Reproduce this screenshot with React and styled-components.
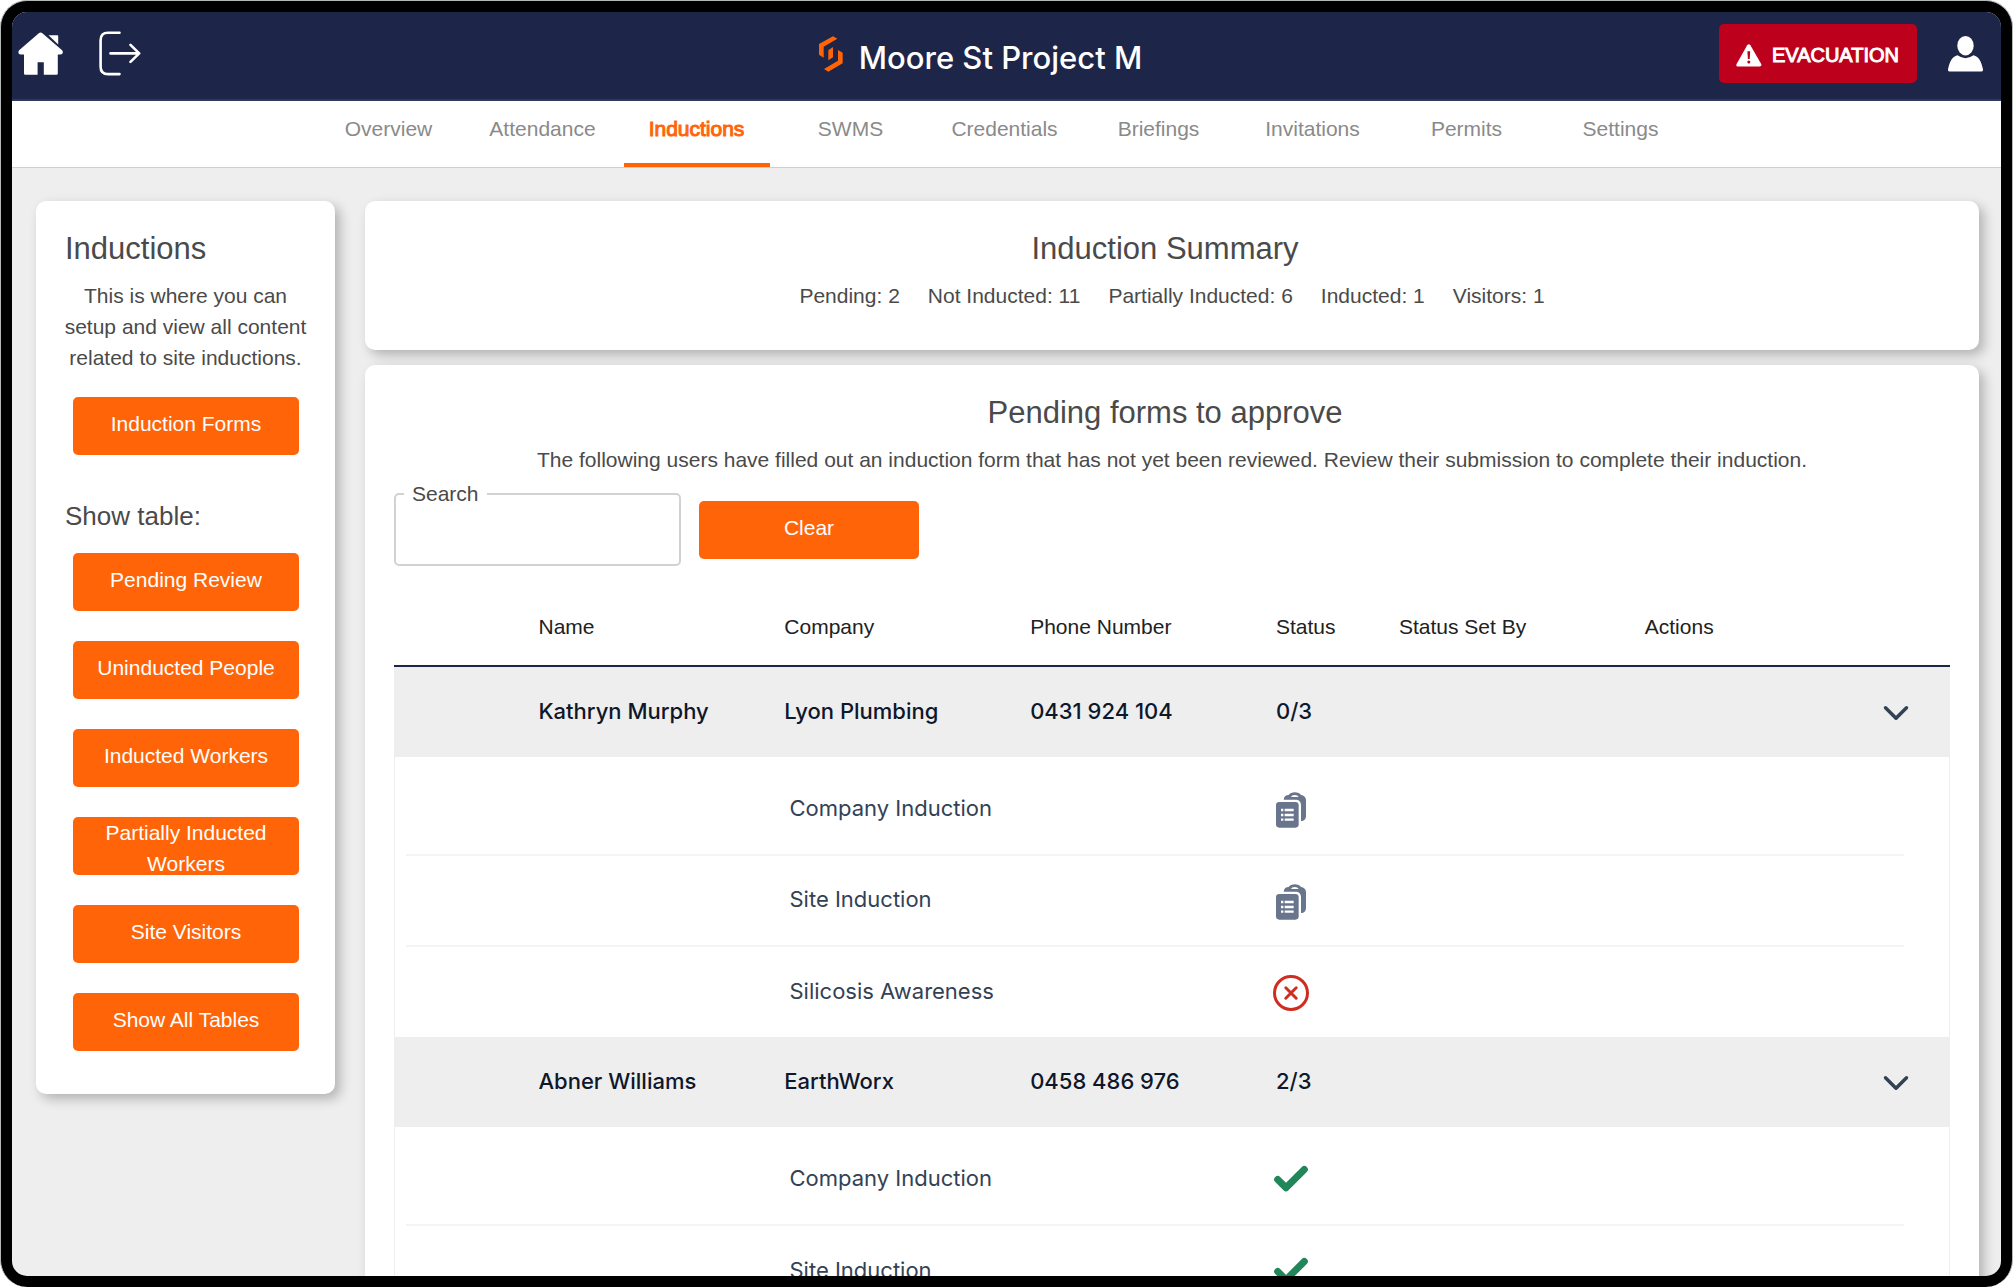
import { Fragment, useState } from "react";
import styled, { createGlobalStyle } from "styled-components";
import { ChevronDown } from "lucide-react";

const GlobalStyle = createGlobalStyle`
  :root {
    --navy-color: #1d2649;
    --orange-color: #ff6508;
    --red-color: #bd001c;
    --grey-color: #eeeeee;
    --text-color: #4a4a4a;
    --sans: "Liberation Sans", Arial, sans-serif;
    --inter: Inter, "Liberation Sans", sans-serif;
  }

  * {
    box-sizing: border-box;
  }

  body {
    margin: 0;
    background: #ffffff;
    color: var(--text-color);
    font-family: var(--sans);
    font-size: 21px;
    line-height: 31px;
  }

  button,
  input {
    font: inherit;
  }
`;

const Device = styled.div`
  height: 100vh;
  padding: 11px;
  background: #000000;
  border: 1px solid #b4b9b7;
  border-bottom: 0;
  border-radius: 27px;
`;

const Screen = styled.div`
  height: 100%;
  overflow: hidden;
  background: var(--grey-color);
  border-radius: 15px;
`;

const Header = styled.header`
  display: grid;
  grid-template-columns: 1fr auto 1fr;
  align-items: center;
  height: 89px;
  padding: 0 18px 6px 6px;
  background: var(--navy-color);
  box-shadow: inset 0 -2px 1px #2f3a60;
`;

const HeaderGroup = styled.div`
  display: flex;
  align-items: center;
  justify-content: ${(props) => (props.$end ? "flex-end" : "flex-start")};
  gap: ${(props) => (props.$end ? "31px" : "35px")};
`;

const IconButton = styled.button`
  display: flex;
  padding: 0;
  border: 0;
  background: none;
  color: #ffffff;
  cursor: pointer;
`;

const Brand = styled.div`
  display: flex;
  align-items: center;
  gap: 16px;
  padding-right: 40px;
`;

const BrandTitle = styled.h1`
  margin: 0;
  padding-top: 8px;
  color: #ffffff;
  font-family: var(--inter);
  font-size: 31px;
  font-weight: 500;
  line-height: 36px;
`;

const EvacuationButton = styled.button`
  display: flex;
  align-items: center;
  gap: 10px;
  height: 59px;
  padding: 4px 18px 0 17px;
  border: 0;
  border-radius: 5px;
  background: var(--red-color);
  color: #ffffff;
  font-size: 20px;
  -webkit-text-stroke: 1px #ffffff;
  cursor: pointer;
`;

const Nav = styled.nav`
  display: flex;
  justify-content: center;
  gap: 8px;
  height: 67px;
  padding-right: 4px;
  background: #ffffff;
  border-bottom: 1px solid #cfcfcf;
`;

const Tab = styled.a`
  width: 146px;
  padding-top: 12px;
  border-bottom: 4px solid
    ${(props) => (props.$active ? "var(--orange-color)" : "transparent")};
  color: ${(props) => (props.$active ? "var(--orange-color)" : "#8a8a8a")};
  -webkit-text-stroke: ${(props) => (props.$active ? "1px" : "0")};
  text-align: center;
  text-decoration: none;
`;

const Page = styled.div`
  display: grid;
  grid-template-columns: 299px 1fr;
  align-items: start;
  gap: 30px;
  padding: 33px 22px 33px 24px;
`;

const Content = styled.main`
  display: grid;
  gap: 15px;
`;

const Card = styled.section`
  padding: 29px 29px 39px;
  background: #ffffff;
  border-radius: 10px;
  box-shadow: 5px 5px 12px rgba(0, 0, 0, 0.25);
`;

const Sidebar = styled(Card).attrs({ as: "aside" })`
  padding-bottom: 43px;
`;

const Title = styled.h2`
  margin: 0 0 12px;
  padding-right: ${(props) => (props.$center ? "14px" : "0")};
  font-size: 31px;
  font-weight: normal;
  line-height: 38px;
  text-align: ${(props) => (props.$center ? "center" : "left")};
`;

const SubTitle = styled.h3`
  margin: 44px 0 20px;
  font-size: 26px;
  font-weight: normal;
  line-height: 34px;
`;

const Text = styled.p`
  margin: 0 -4px;
  text-align: center;
`;

const Button = styled.button`
  display: flex;
  align-items: safe center;
  justify-content: center;
  width: ${(props) => props.$width || "100%"};
  height: 58px;
  padding: 0 16px 5px;
  border: 0;
  border-radius: 5px;
  background: var(--orange-color);
  color: #ffffff;
  cursor: pointer;
`;

const ButtonList = styled.div`
  display: grid;
  gap: 30px;
  margin: 0 7px 0 8px;
`;

const Intro = styled(Text)`
  margin-bottom: 24px;
`;

const Counts = styled.ul`
  display: flex;
  justify-content: center;
  gap: 28px;
  margin: 0;
  padding: 0;
  list-style: none;
`;

const Filters = styled.form`
  display: flex;
  align-items: flex-end;
  gap: 18px;
  margin-top: 4px;
`;

const SearchBox = styled.fieldset`
  width: 287px;
  height: 87px;
  margin: 0;
  padding: 0 8px;
  border: 2px solid #d2d2d2;
  border-radius: 5px;
`;

const SearchLegend = styled.legend`
  padding: 0 8px;
  line-height: 30px;
`;

const SearchInput = styled.input`
  width: 100%;
  height: 50px;
  padding: 0 8px;
  border: 0;
  outline: 0;
  background: none;
  color: var(--text-color);
`;

const ClearWrap = styled.div`
  padding-bottom: 7px;
`;

const Table = styled.table`
  width: 100%;
  margin-top: 21px;
  border-collapse: separate;
  border-spacing: 0;
  table-layout: fixed;
`;

const HeadCell = styled.th`
  height: 80px;
  padding: 0 0 0 20px;
  border-bottom: 2px solid var(--navy-color);
  color: #212121;
  font-weight: normal;
  text-align: left;
`;

const GroupRow = styled.tr`
  background: var(--grey-color);
`;

const GroupCell = styled.td`
  height: 90px;
  padding: 0 0 2px 20px;
  color: #0f172a;
  font-family: var(--inter);
  font-size: 22px;
  font-weight: 500;
`;

const ToggleCell = styled(GroupCell)`
  padding: 2px 33px 0 0;
`;

const Toggle = styled(IconButton)`
  margin-left: auto;
  color: #334155;
`;

const DetailCell = styled.td`
  padding: 7px 45px 0 11px;
  border: 1px solid var(--grey-color);
  border-width: 0 1px;
`;

const DetailTable = styled.table`
  width: 100%;
  border-collapse: collapse;
  table-layout: fixed;
`;

const Detail = styled.td`
  padding: 0 0 2px;
  color: #334155;
  font-family: var(--inter);
  font-size: 22px;

  svg {
    display: block;
  }
`;

const StatusCell = styled(Detail)`
  padding: 2px 0 0 1px;
`;

const DetailRow = styled.tr`
  height: 91px;

  & + & > td {
    border-top: 2px solid #f4f4f4;
  }
`;

const StatusIcon = styled.svg`
  width: 36px;
  height: 36px;
`;

const HomeIcon = () => (
  <svg width="46" height="44" viewBox="0 0 46 44" fill="currentColor">
    <path d="M20.8 1.2Q22.6-.3 24.4 1.2L43.8 18Q45.4 19.4 44.6 21.2Q44 22.6 42 22.6H39.8V41.6Q39.8 42.8 38.6 42.8H25.8V30.2H19.6V42.8H7.2Q6 42.8 6 41.6V22.6H3.2Q1.2 22.6.6 21.2Q0 19.4 1.4 18Z" />
    <path d="M30.5 3.2H39.4Q40.2 3.2 40.2 4V12.4Z" />
  </svg>
);

const LogoutIcon = () => (
  <svg
    width="42"
    height="46"
    viewBox="0 0 42 46"
    fill="none"
    stroke="currentColor"
    strokeWidth="2.6"
    strokeLinecap="round"
    strokeLinejoin="round"
  >
    <path d="M20.5 1.7H9Q1.6 1.7 1.6 9.1V35.7Q1.6 43.1 9 43.1H20.5" />
    <path d="M11.5 22.4H40M31.5 13.9L40.2 22.4L31.5 30.9" />
  </svg>
);

const Logo = () => (
  <svg width="24" height="36" viewBox="0 0 72 108" fill="#ff6508">
    <path d="M42 1L55 8L14 32V65L0 56V24Z" />
    <path d="M28 43L42 33V64L28 73Z" />
    <path d="M57 42L71 50V82L28 107L15 99L57 74Z" />
  </svg>
);

const WarningIcon = () => (
  <svg width="26" height="23" viewBox="0 0 26 23">
    <path
      d="M11.2 1.2Q12.8-.8 14.4 1.2L25.2 20Q26 22.4 23.8 22.4H1.9Q-.4 22.4.6 20Z"
      fill="#ffffff"
    />
    <path d="M11.4 7.2H14.2L13.7 15H11.9Z" fill="#bd001c" />
    <circle cx="12.8" cy="18" r="1.5" fill="#bd001c" />
  </svg>
);

const UserIcon = () => (
  <svg width="35" height="36" viewBox="0 0 35 36" fill="currentColor">
    <ellipse cx="17.5" cy="9.7" rx="8.2" ry="9.7" />
    <path d="M9.5 19.3Q17.5 25 25.5 19.3C31 20.5 33.5 26 35 33.5Q35.2 35.6 33.2 35.6H1.8Q-.2 35.6 0 33.5C1.5 26 4 20.5 9.5 19.3Z" />
  </svg>
);

const Status = (props) => {
  const { type } = props;

  if (type === "review") {
    return (
      <StatusIcon viewBox="-9 0 108 108" role="img" aria-label="Needs review">
        <rect x="0" y="30" width="68" height="77" rx="10" fill="#69758c" />
        <path
          d="M23 23C24 13 30 9 38 9C44-2 69-2 75 9C84 10 90 16 90 25V72C90 81 84 87 75 87V40C75 29 69 23 58 23Z"
          fill="#69758c"
        />
        <path d="M45 15Q47 9 56 9T68 15Z" fill="#ffffff" />
        <path
          d="M15 54H22M26 54H53M15 69H22M26 69H53M15 83H22M26 83H53"
          stroke="#ffffff"
          strokeWidth="7"
        />
      </StatusIcon>
    );
  }

  if (type === "rejected") {
    return (
      <StatusIcon
        viewBox="0 0 36 36"
        fill="none"
        stroke="#cf2e1f"
        strokeWidth="3"
        strokeLinecap="round"
        role="img"
        aria-label="Rejected"
      >
        <circle cx="18" cy="18" r="16.5" />
        <path d="M12.8 12.8L23.2 23.2M23.2 12.8L12.8 23.2" />
      </StatusIcon>
    );
  }

  return (
    <StatusIcon
      viewBox="0 0 36 36"
      fill="none"
      stroke="#22865b"
      strokeWidth="7"
      strokeLinecap="round"
      strokeLinejoin="round"
      role="img"
      aria-label="Approved"
    >
      <path d="M4.7 17.5L13 25.8L31.3 7.5" />
    </StatusIcon>
  );
};

const tabs = [
  "Overview",
  "Attendance",
  "Inductions",
  "SWMS",
  "Credentials",
  "Briefings",
  "Invitations",
  "Permits",
  "Settings",
];

const tables = [
  "Pending Review",
  "Uninducted People",
  "Inducted Workers",
  "Partially Inducted Workers",
  "Site Visitors",
  "Show All Tables",
];

const counts = [
  ["Pending", 2],
  ["Not Inducted", 11],
  ["Partially Inducted", 6],
  ["Inducted", 1],
  ["Visitors", 1],
];

const columns = [
  ["", "8%"],
  ["Name", "15.8%"],
  ["Company", "15.8%"],
  ["Phone Number", "15.8%"],
  ["Status", "7.9%"],
  ["Status Set By", "15.8%"],
  ["Actions", "20.9%"],
];

const people = [
  {
    name: "Kathryn Murphy",
    company: "Lyon Plumbing",
    phone: "0431 924 104",
    status: "0/3",
    forms: [
      ["Company Induction", "review"],
      ["Site Induction", "review"],
      ["Silicosis Awareness", "rejected"],
    ],
  },
  {
    name: "Abner Williams",
    company: "EarthWorx",
    phone: "0458 486 976",
    status: "2/3",
    forms: [
      ["Company Induction", "approved"],
      ["Site Induction", "approved"],
    ],
  },
];

const Person = (props) => {
  const { name, company, phone, status, forms } = props;
  const [open, setOpen] = useState(true);

  return (
    <Fragment>
      <GroupRow>
        <GroupCell />
        <GroupCell>{name}</GroupCell>
        <GroupCell>{company}</GroupCell>
        <GroupCell>{phone}</GroupCell>
        <GroupCell>{status}</GroupCell>
        <GroupCell />
        <ToggleCell>
          <Toggle
            type="button"
            aria-label={`Toggle ${name}`}
            aria-expanded={open}
            onClick={() => setOpen(!open)}
          >
            <ChevronDown size={42} />
          </Toggle>
        </ToggleCell>
      </GroupRow>
      {open && (
        <tr>
          <DetailCell colSpan={7}>
            <DetailTable>
              <colgroup>
                <col width="25.6%" />
                <col width="32.2%" />
                <col />
              </colgroup>
              <tbody>
                {forms.map(([form, type]) => (
                  <DetailRow key={form}>
                    <Detail />
                    <Detail>{form}</Detail>
                    <StatusCell>
                      <Status type={type} />
                    </StatusCell>
                  </DetailRow>
                ))}
              </tbody>
            </DetailTable>
          </DetailCell>
        </tr>
      )}
    </Fragment>
  );
};

const App = () => {
  const [search, setSearch] = useState("");

  const visible = people.filter((person) =>
    person.name.toLowerCase().includes(search.toLowerCase())
  );

  return (
    <Device>
      <GlobalStyle />
      <Screen>
        <Header>
          <HeaderGroup>
            <IconButton type="button" aria-label="Home">
              <HomeIcon />
            </IconButton>
            <IconButton type="button" aria-label="Log out">
              <LogoutIcon />
            </IconButton>
          </HeaderGroup>
          <Brand>
            <Logo />
            <BrandTitle>Moore St Project M</BrandTitle>
          </Brand>
          <HeaderGroup $end>
            <EvacuationButton type="button">
              <WarningIcon />
              EVACUATION
            </EvacuationButton>
            <IconButton type="button" aria-label="Account">
              <UserIcon />
            </IconButton>
          </HeaderGroup>
        </Header>

        <Nav>
          {tabs.map((tab) => (
            <Tab key={tab} href="#" $active={tab === "Inductions"}>
              {tab}
            </Tab>
          ))}
        </Nav>

        <Page>
          <Sidebar>
            <Title>Inductions</Title>
            <Intro>
              This is where you can setup and view all content related to site
              inductions.
            </Intro>
            <ButtonList>
              <Button type="button">Induction Forms</Button>
            </ButtonList>
            <SubTitle>Show table:</SubTitle>
            <ButtonList>
              {tables.map((table) => (
                <Button key={table} type="button">
                  {table}
                </Button>
              ))}
            </ButtonList>
          </Sidebar>

          <Content>
            <Card>
              <Title $center>Induction Summary</Title>
              <Counts>
                {counts.map(([label, count]) => (
                  <li key={label}>{`${label}: ${count}`}</li>
                ))}
              </Counts>
            </Card>

            <Card>
              <Title $center>Pending forms to approve</Title>
              <Text>
                The following users have filled out an induction form that has
                not yet been reviewed. Review their submission to complete their
                induction.
              </Text>
              <Filters>
                <SearchBox>
                  <SearchLegend>
                    <label htmlFor="search">Search</label>
                  </SearchLegend>
                  <SearchInput
                    id="search"
                    type="text"
                    value={search}
                    onChange={(e) => setSearch(e.target.value)}
                  />
                </SearchBox>
                <ClearWrap>
                  <Button
                    type="button"
                    $width="220px"
                    onClick={() => setSearch("")}
                  >
                    Clear
                  </Button>
                </ClearWrap>
              </Filters>
              <Table>
                <colgroup>
                  {columns.map(([label, width]) => (
                    <col key={label} width={width} />
                  ))}
                </colgroup>
                <thead>
                  <tr>
                    {columns.map(([label]) => (
                      <HeadCell key={label}>{label}</HeadCell>
                    ))}
                  </tr>
                </thead>
                <tbody>
                  {visible.map((person) => (
                    <Person key={person.name} {...person} />
                  ))}
                </tbody>
              </Table>
            </Card>
          </Content>
        </Page>
      </Screen>
    </Device>
  );
};

export default App;
